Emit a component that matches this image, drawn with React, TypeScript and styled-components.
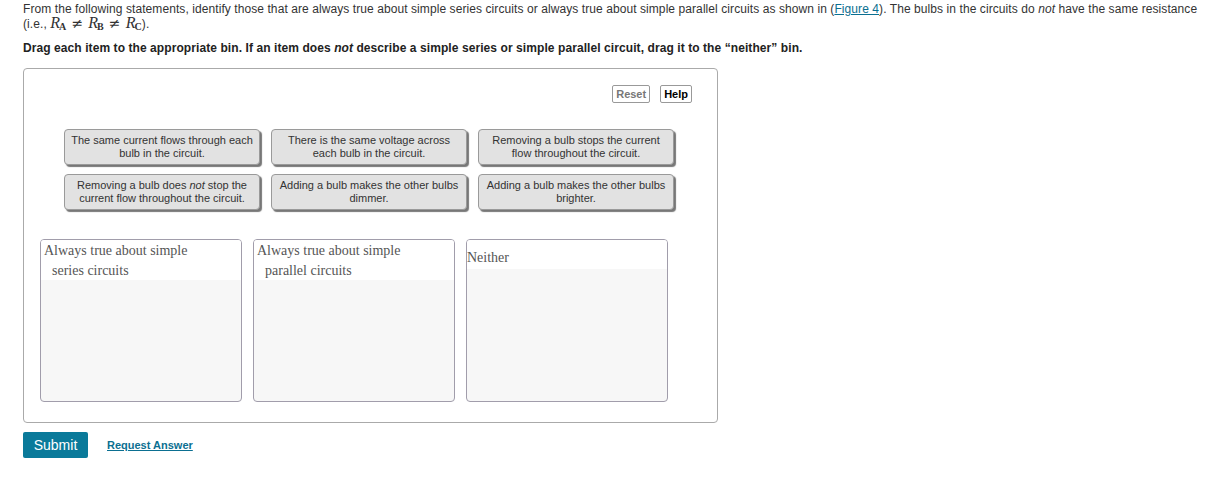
import styled, { createGlobalStyle } from 'styled-components'

const GlobalStyle = createGlobalStyle`
  body {
    margin: 0;
    background: #fff;
    font-family: "Liberation Sans", Arial, sans-serif;
    color: #333;
  }
`

const Page = styled.div`
  padding: 2px 0 0 23px;
  width: 1204px;
`

const Prompt = styled.p`
  margin: 0;
  font-size: 12px;
  line-height: 15px;
  letter-spacing: 0.08px;
  color: #333;
`

const Instructions = styled.p`
  margin: 9px 0 0;
  font-size: 12px;
  line-height: 15px;
  letter-spacing: 0.08px;
  font-weight: bold;
  color: #222;
`

const FigureLink = styled.a`
  color: #0b6f91;
  text-decoration: underline;
`

// math pieces for the R_A != R_B != R_C line
const MathVar = styled.span`
  font-family: "Liberation Serif", "Times New Roman", serif;
  font-style: italic;
  font-size: 16px;
  line-height: 0;
`
const MathSub = styled.span`
  font-family: "Liberation Serif", "Times New Roman", serif;
  font-style: normal;
  font-weight: bold;
  font-size: 10px;
  line-height: 0;
  position: relative;
  top: 2px;
  margin-left: -1px;
`
const MathOp = styled.span`
  font-family: "DejaVu Serif", serif;
  font-size: 14px;
  line-height: 0;
  margin: 0 5px;
`

const Panel = styled.div`
  margin-top: 12px;
  width: 693px;
  height: 353px;
  border: 1px solid #aaa;
  border-radius: 4px;
  box-sizing: content-box;
`

const Toolbar = styled.div`
  display: flex;
  justify-content: flex-end;
  gap: 10px;
  padding: 16px 25px 0 0;
`

const ToolButton = styled.button<{ $strong?: boolean }>`
  height: 18px;
  padding: 0 3px;
  background: #fff;
  border: 1px solid #999;
  border-radius: 2px;
  font-family: "Liberation Sans", Arial, sans-serif;
  font-size: 11px;
  font-weight: bold;
  color: ${p => (p.$strong ? '#000' : '#777')};
  cursor: pointer;
`

const ItemGrid = styled.div`
  display: grid;
  grid-template-columns: repeat(3, 196px);
  column-gap: 11px;
  row-gap: 9px;
  padding: 26px 0 0 40px;
`

const Item = styled.div`
  height: 36px;
  box-sizing: border-box;
  padding: 4px 4px 0;
  background: #e2e2e2;
  border: 1px solid #9a9a9a;
  border-radius: 4px;
  box-shadow: 2px 2px 1px #777;
  font-size: 11px;
  line-height: 13px;
  text-align: center;
  color: #333;
`

const BinRow = styled.div`
  display: flex;
  gap: 11px;
  padding: 29px 0 0 16px;
`

const Bin = styled.div`
  width: 202px;
  height: 163px;
  box-sizing: border-box;
  border: 1px solid #a19dab;
  border-radius: 4px;
  background: #f7f7f7;
  overflow: hidden;
  display: flex;
  flex-direction: column;
`

const BinHeader = styled.div<{ $flush?: boolean }>`
  background: #fff;
  font-family: "Liberation Serif", "Times New Roman", serif;
  font-size: 14px;
  color: #555;
  ${p =>
    p.$flush
      ? `
    height: 29px;
    padding: 10px 0 0 0;
    box-sizing: border-box;
    line-height: 16px;
  `
      : `
    height: 40px;
    box-sizing: border-box;
    padding: 1px 4px 0 11px;
    text-indent: -8px;
    line-height: 20px;
  `}
`

const Footer = styled.div`
  display: flex;
  align-items: center;
  gap: 19px;
  margin-top: 9px;
`

const SubmitButton = styled.button`
  width: 65px;
  height: 26px;
  background: #0a7a9a;
  border: none;
  border-radius: 2px;
  color: #fff;
  font-family: "Liberation Sans", Arial, sans-serif;
  font-size: 14px;
  padding: 0;
  cursor: pointer;
`

const RequestLink = styled.a`
  font-size: 11px;
  font-weight: bold;
  color: #0b6f91;
  text-decoration: underline;
`

const items = [
  <>The same current flows through each bulb in the circuit.</>,
  <>There is the same voltage across each bulb in the circuit.</>,
  <>Removing a bulb stops the current flow throughout the circuit.</>,
  <>Removing a bulb does <i>not</i> stop the current flow throughout the circuit.</>,
  <>Adding a bulb makes the other bulbs dimmer.</>,
  <>Adding a bulb makes the other bulbs brighter.</>,
]

export default function App() {
  return (
    <Page>
      <GlobalStyle />
      <Prompt>
        From the following statements, identify those that are always true about simple series circuits or always
        true about simple parallel circuits as shown in (<FigureLink href="#">Figure 4</FigureLink>). The bulbs in the
        circuits do <i>not</i> have the same resistance
        <br />
        (i.e., <MathVar>R</MathVar>
        <MathSub>A</MathSub>
        <MathOp>≠</MathOp>
        <MathVar>R</MathVar>
        <MathSub>B</MathSub>
        <MathOp>≠</MathOp>
        <MathVar>R</MathVar>
        <MathSub>C</MathSub>).
      </Prompt>
      <Instructions>
        Drag each item to the appropriate bin. If an item does <i>not</i> describe a simple series or simple parallel
        circuit, drag it to the “neither” bin.
      </Instructions>

      <Panel>
        <Toolbar>
          <ToolButton>Reset</ToolButton>
          <ToolButton $strong>Help</ToolButton>
        </Toolbar>

        <ItemGrid>
          {items.map((content, i) => (
            <Item key={i}>{content}</Item>
          ))}
        </ItemGrid>

        <BinRow>
          <Bin>
            <BinHeader>
              Always true about simple
              <br />
              series circuits
            </BinHeader>
          </Bin>
          <Bin>
            <BinHeader>
              Always true about simple
              <br />
              parallel circuits
            </BinHeader>
          </Bin>
          <Bin>
            <BinHeader $flush>Neither</BinHeader>
          </Bin>
        </BinRow>
      </Panel>

      <Footer>
        <SubmitButton>Submit</SubmitButton>
        <RequestLink href="#">Request Answer</RequestLink>
      </Footer>
    </Page>
  )
}
